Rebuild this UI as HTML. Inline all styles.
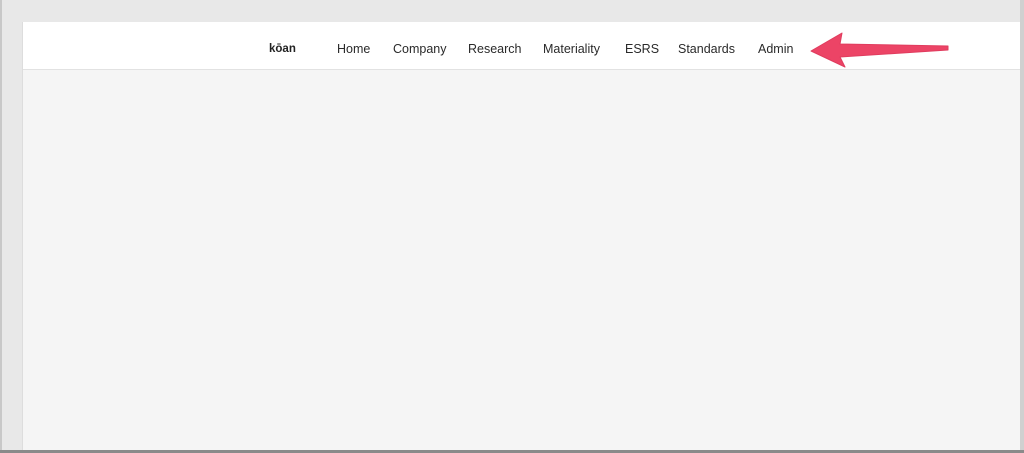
<!DOCTYPE html>
<html><head><style>
html,body{margin:0;padding:0;width:1024px;height:453px;overflow:hidden;background:#e8e8e8;font-family:"Liberation Sans",sans-serif;}
.lb{position:absolute;left:0;top:0;width:2px;height:453px;background:#c8c8c8}
.bb{position:absolute;left:0;top:450px;width:1024px;height:3px;background:#8a8a8a}
.rb{position:absolute;left:1020px;top:0;width:4px;height:453px;background:#d0d0d0}
.panel{position:absolute;left:22px;top:22px;width:998px;height:428px;background:#f5f5f5;border-left:1px solid #ddd}
.hdr{position:absolute;left:0;top:0;width:998px;height:47px;background:#fff;border-bottom:1px solid #e2e2e2}
.t{position:absolute;top:20px;font-size:12.5px;color:#2a2a2a;white-space:nowrap}
.logo{font-weight:bold;font-size:11.5px;color:#222;top:21px}
</style></head><body>
<div class="lb"></div>
<div class="panel"><div class="hdr">
<span class="t logo" style="left:246px">kōan</span>
<span class="t" style="left:314px">Home</span>
<span class="t" style="left:370px">Company</span>
<span class="t" style="left:445px">Research</span>
<span class="t" style="left:520px">Materiality</span>
<span class="t" style="left:602px">ESRS</span>
<span class="t" style="left:655px">Standards</span>
<span class="t" style="left:735px">Admin</span>
</div></div>
<div class="rb"></div>
<div class="bb"></div>
<svg style="position:absolute;left:0;top:0" width="1024" height="453">
<path d="M811,51 L842,33 L840,44 L948,46 L948,50 L840,57 L845,67 Z" fill="#ec4466" stroke="#e03c5e" stroke-width="1" stroke-linejoin="round"/>
</svg>
</body></html>
